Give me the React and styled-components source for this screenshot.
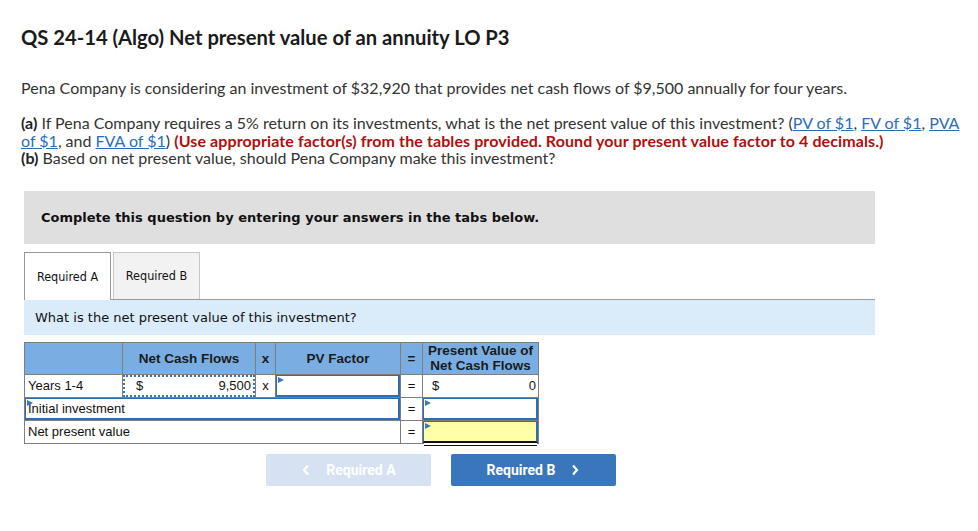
import React from 'react';
import styled, { createGlobalStyle } from 'styled-components';

const GlobalStyle = createGlobalStyle`
  body {
    margin: 0;
    background: #fff;
    color: #222;
    font-family: Lato, "Open Sans", sans-serif;
  }
`;

const Page = styled.div`
  padding: 23px 0 0 21px;
  width: 957px;
`;

const Title = styled.h1`
  margin: 0;
  font-size: 20.2px;
  font-weight: 700;
  line-height: 28px;
  color: #1a1a1a;
`;

const Intro = styled.p`
  margin: 28px 0 0;
  font-size: 16px;
  line-height: 18px;
  color: #333;
`;

const Question = styled.div`
  margin-top: 17px;
  font-size: 16px;
  line-height: 17.5px;
  color: #333;
`;

const Part = styled.span`
  font-weight: 700;
  color: #222;
`;

const TableLink = styled.a`
  color: #2a6ebb;
  text-decoration: underline;
`;

const Warn = styled.span`
  font-weight: 700;
  color: #b00e0e;
  letter-spacing: 0.1px;
`;

const Workspace = styled.div`
  margin: 24px 0 0 3px;
  width: 851px;
`;

const Banner = styled.div`
  height: 53px;
  background: #dfdfdf;
  display: flex;
  align-items: center;
  padding-left: 17px;
  font-family: "DejaVu Sans", Verdana, sans-serif;
  font-size: 13px;
  font-weight: 700;
  color: #111;
`;

const Tabs = styled.div`
  margin-top: 8px;
  display: flex;
  gap: 2px;
  border-bottom: 1px solid #999;
  height: 47px;
  align-items: flex-end;
`;

const Tab = styled.div`
  width: 87px;
  box-sizing: border-box;
  display: flex;
  align-items: center;
  justify-content: center;
  border: 1px solid ${p => (p.$active ? '#999' : '#c6c6c6')};
  border-bottom: none;
  background: ${p => (p.$active ? '#fff' : '#f2f2f2')};
  margin-bottom: ${p => (p.$active ? '-1px' : '0')};
  height: ${p => (p.$active ? '48px' : '47px')};
  font-family: "DejaVu Sans Condensed", "DejaVu Sans", sans-serif;
  font-size: 12.5px;
  color: #111;
`;

const Prompt = styled.div`
  height: 35px;
  background: #daebf9;
  display: flex;
  align-items: center;
  padding-left: 11px;
  font-family: "DejaVu Sans", Verdana, sans-serif;
  font-size: 13px;
  color: #111;
`;

const Grid = styled.table`
  margin-top: 7px;
  border-collapse: collapse;
  font-family: "Liberation Sans", Arial, sans-serif;
  font-size: 13px;
  color: #111;
  table-layout: fixed;
  width: 514px;
`;

const Head = styled.th`
  background: #7aaee3;
  border: 1px solid #7f7f7f;
  height: 31px;
  padding: 0;
  font-weight: 700;
  font-size: 13.5px;
  line-height: 15px;
  color: #1a1a1a;
  text-align: center;
`;

const Cell = styled.td`
  border: 1px solid #7f7f7f;
  height: 22px;
  padding: 0 3px;
  text-align: ${p => p.$align || 'left'};
  white-space: nowrap;
`;

const Slot = styled.td`
  border: 1px solid #7f7f7f;
  height: 22px;
  padding: 0;
`;

const Given = styled.div`
  height: 22px;
  box-sizing: border-box;
  border: 2px dotted #3a76bb;
  display: flex;
  justify-content: space-between;
  align-items: center;
  padding: 0 2px 0 11px;
`;

const Field = styled.div`
  position: relative;
  height: 22px;
  box-sizing: border-box;
  border: 1px solid #2f6db0;
  border-width: 1px 2px 2px 1px;
  background: ${p => (p.$total ? '#ffffa8' : '#fff')};
  padding-left: 2px;
  display: flex;
  align-items: center;
  box-shadow: ${p => (p.$total ? '0 3px 0 -1px #fff, 0 4px 0 -1px #111' : 'none')};
  border-bottom-color: ${p => (p.$total ? '#111' : '#2f6db0')};
  &::before {
    content: '';
    position: absolute;
    left: 1px;
    top: 1px;
    border-left: 6px solid #3a76bb;
    border-top: 3px solid transparent;
    border-bottom: 3px solid transparent;
  }
`;

const Money = styled.div`
  display: flex;
  justify-content: space-between;
  padding: 0 2px 0 9px;
`;

const Nav = styled.div`
  margin: 10px 0 0 242px;
  display: flex;
  gap: 20px;
`;

const NavButton = styled.button`
  width: 165px;
  height: 32px;
  border: none;
  border-radius: 2px;
  background: ${p => (p.$disabled ? '#d6e2f1' : '#3a76bb')};
  color: #fff;
  font-family: Roboto, "Liberation Sans", sans-serif;
  font-size: 14px;
  font-weight: 700;
  display: flex;
  align-items: center;
  justify-content: center;
  gap: 15px;
  padding: 0;
  svg { width: 10px; height: 12px; }
`;

const Chevron = ({ dir }) => (
  <svg viewBox="0 0 10 12">
    <path
      d={dir === 'left' ? 'M7 1.5 L3 6 L7 10.5' : 'M3 1.5 L7 6 L3 10.5'}
      fill="none"
      stroke="#fff"
      strokeWidth="2.2"
    />
  </svg>
);

const App = () => (
  <Page>
    <GlobalStyle />
    <Title>QS 24-14 (Algo) Net present value of an annuity LO P3</Title>
    <Intro>
      Pena Company is considering an investment of $32,920 that provides net cash flows of $9,500 annually for four years.
    </Intro>
    <Question>
      <Part>(a)</Part> If Pena Company requires a 5% return on its investments, what is the net present value of this investment? (
      <TableLink>PV of $1</TableLink>, <TableLink>FV of $1</TableLink>, <TableLink>PVA</TableLink>
      <br />
      <TableLink>of $1</TableLink>, and <TableLink>FVA of $1</TableLink>){' '}
      <Warn>(Use appropriate factor(s) from the tables provided. Round your present value factor to 4 decimals.)</Warn>
      <br />
      <Part>(b)</Part> Based on net present value, should Pena Company make this investment?
    </Question>

    <Workspace>
      <Banner>Complete this question by entering your answers in the tabs below.</Banner>
      <Tabs>
        <Tab $active>Required A</Tab>
        <Tab>Required B</Tab>
      </Tabs>
      <Prompt>What is the net present value of this investment?</Prompt>

      <Grid>
        <colgroup>
          <col style={{ width: 98 }} />
          <col style={{ width: 133 }} />
          <col style={{ width: 20 }} />
          <col style={{ width: 125 }} />
          <col style={{ width: 22 }} />
          <col style={{ width: 116 }} />
        </colgroup>
        <thead>
          <tr>
            <Head />
            <Head>Net Cash Flows</Head>
            <Head>x</Head>
            <Head>PV Factor</Head>
            <Head>=</Head>
            <Head>Present Value of<br />Net Cash Flows</Head>
          </tr>
        </thead>
        <tbody>
          <tr>
            <Cell>Years 1-4</Cell>
            <Slot>
              <Given><span>$</span><span>9,500</span></Given>
            </Slot>
            <Cell $align="center">x</Cell>
            <Slot><Field /></Slot>
            <Cell $align="center">=</Cell>
            <Slot><Money><span>$</span><span>0</span></Money></Slot>
          </tr>
          <tr>
            <Slot colSpan={4}><Field>Initial investment</Field></Slot>
            <Cell $align="center">=</Cell>
            <Slot><Field /></Slot>
          </tr>
          <tr>
            <Cell colSpan={4}>Net present value</Cell>
            <Cell $align="center">=</Cell>
            <Slot><Field $total /></Slot>
          </tr>
        </tbody>
      </Grid>

      <Nav>
        <NavButton $disabled><Chevron dir="left" />Required A</NavButton>
        <NavButton>Required B<Chevron dir="right" /></NavButton>
      </Nav>
    </Workspace>
  </Page>
);

export default App;
